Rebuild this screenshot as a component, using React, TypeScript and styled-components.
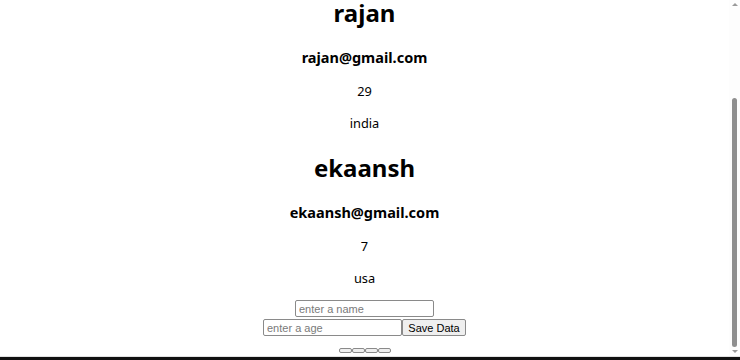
import React, { useEffect, useRef, useState } from "react";
import styled, { createGlobalStyle } from "styled-components";

type User = { name: string; email: string; age: number; country: string };

const users: User[] = [
    { name: "rajan", email: "rajan@gmail.com", age: 29, country: "india" },
    { name: "ekaansh", email: "ekaansh@gmail.com", age: 7, country: "usa" },
];

const App = () => {
    const scrollRef = useRef<HTMLDivElement>(null);
    const [name, setName] = useState("");
    const [age, setAge] = useState("");

    useEffect(() => {
        const el = scrollRef.current;
        if (el) el.scrollTop = el.scrollHeight;
    }, []);

    return (
        <>
            <GlobalStyle />
            <Frame>
                <Scroller ref={scrollRef}>
                    <Page>
                        <List>
                            {users.map((user, index) => (
                                <UserCard key={index}>
                                    <Name>{user.name}</Name>
                                    <Email>{user.email}</Email>
                                    <Info>{user.age}</Info>
                                    <Info>{user.country}</Info>
                                </UserCard>
                            ))}
                        </List>
                        <Form>
                            <Input
                                placeholder="enter a name"
                                value={name}
                                onChange={(e) => setName(e.target.value)}
                            />
                            <Row>
                                <Input
                                    placeholder="enter a age"
                                    value={age}
                                    onChange={(e) => setAge(e.target.value)}
                                />
                                <SaveButton>Save Data</SaveButton>
                            </Row>
                        </Form>
                        <Pager>
                            <Dot />
                            <Dot />
                            <Dot />
                            <Dot />
                        </Pager>
                    </Page>
                </Scroller>
                <ScrollBar>
                    <Arrow $dir="up" />
                    <Track>
                        <Thumb />
                    </Track>
                    <Arrow $dir="down" />
                </ScrollBar>
            </Frame>
        </>
    );
};

export default App;

const GlobalStyle = createGlobalStyle`
html, body {
  margin: 0;
  padding: 0;
  background: #111;
  overflow: hidden;
}
`;

const Frame = styled.div`
display: flex;
width: 740px;
height: 357px;
background: #fff;
border-bottom: 1px solid #e2e2e2;
box-sizing: border-box;
`;

const Scroller = styled.div`
flex: 1;
height: 100%;
overflow-y: scroll;
scrollbar-width: none;
font-family: "Noto Sans", "Open Sans", sans-serif;
color: #000;

&::-webkit-scrollbar {
  display: none;
}
`;

const ScrollBar = styled.div`
width: 11px;
display: flex;
flex-direction: column;
align-items: center;
background: #fdfdfd;
`;

const Arrow = styled.div<{ $dir: "up" | "down" }>`
width: 0;
height: 0;
margin: ${({ $dir }) => ($dir === "up" ? "3px 0 6px" : "3px 0 3px")};
border-left: 3px solid transparent;
border-right: 3px solid transparent;
${({ $dir }) =>
    $dir === "up" ? "border-bottom: 3px solid #9a9a9a;" : "border-top: 3px solid #9a9a9a;"}
`;

const Track = styled.div`
flex: 1;
width: 100%;
display: flex;
flex-direction: column;
justify-content: flex-end;
align-items: center;
`;

const Thumb = styled.div`
width: 5px;
height: 249px;
border-radius: 3px;
background: #8f8f8f;
`;

const Page = styled.div`
display: flex;
flex-direction: column;
align-items: center;
padding: 110px 0 3px;
`;

const List = styled.div`
display: flex;
flex-direction: column;
align-items: center;
gap: 15px;
`;

const UserCard = styled.div`
display: flex;
flex-direction: column;
align-items: center;
`;

const Name = styled.h1`
margin: 0;
font-size: 24px;
line-height: 40px;
font-weight: 700;
`;

const Email = styled.h3`
margin: 12px 0 0;
font-size: 14.5px;
line-height: 24px;
font-weight: 700;
`;

const Info = styled.p`
margin: 12px 0 0;
font-size: 12.8px;
line-height: 20px;
`;

const Form = styled.div`
display: flex;
flex-direction: column;
align-items: center;
gap: 2px;
margin-top: 12px;
`;

const Row = styled.div`
display: flex;
`;

const Input = styled.input`
width: 139px;
height: 17px;
box-sizing: border-box;
padding: 0 3px;
border: 1px solid #8a8a8a;
border-radius: 2px;
font-family: "Liberation Sans", Arial, sans-serif;
font-size: 11px;
outline: none;

&::placeholder {
  color: #7a7a7a;
}
`;

const SaveButton = styled.button`
width: 64px;
height: 17px;
box-sizing: border-box;
padding: 0;
border: 1px solid #8a8a8a;
border-radius: 2px;
background: #efefef;
font-family: "Liberation Sans", Arial, sans-serif;
font-size: 11px;
white-space: nowrap;
color: #000;
`;

const Pager = styled.div`
display: flex;
margin-top: 12px;
`;

const Dot = styled.button`
width: 13px;
height: 5px;
padding: 0;
border: 1px solid #8a8a8a;
border-radius: 2px;
background: #efefef;
`;
